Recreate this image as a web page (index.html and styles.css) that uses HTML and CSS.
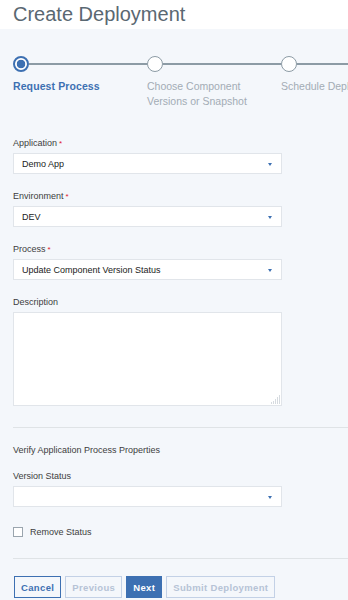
FILE: index.html
```html
<!DOCTYPE html>
<html>
<head>
  <title>Create Deployment</title>
  <link rel="stylesheet" href="styles.css">
</head>
<body>
  <div class="header">
    <h1 class="title">Create Deployment</h1>
  </div>
  <div class="panel">
    <div class="steps">
      <div class="step active">
        <div class="step-track"><span class="dot"></span><span class="line"></span></div>
        <div class="step-label">Request Process</div>
      </div>
      <div class="step">
        <div class="step-track"><span class="dot"></span><span class="line"></span></div>
        <div class="step-label">Choose Component Versions or Snapshot</div>
      </div>
      <div class="step">
        <div class="step-track"><span class="dot"></span><span class="line"></span></div>
        <div class="step-label">Schedule Deployment</div>
      </div>
    </div>

    <div class="form">
      <div class="field">
        <label class="label">Application<span class="req">*</span></label>
        <div class="select"><span>Demo App</span><span class="caret"></span></div>
      </div>
      <div class="field">
        <label class="label">Environment<span class="req">*</span></label>
        <div class="select"><span>DEV</span><span class="caret"></span></div>
      </div>
      <div class="field">
        <label class="label">Process<span class="req">*</span></label>
        <div class="select"><span>Update Component Version Status</span><span class="caret"></span></div>
      </div>
      <div class="field">
        <label class="label">Description</label>
        <div class="textarea-wrap">
          <textarea class="textarea"></textarea>
          <svg class="grip" width="9" height="9" viewBox="0 0 9 9">
            <rect x="0" y="7" width="1" height="2" fill="#d6dbe0"/>
            <rect x="2" y="6" width="1" height="3" fill="#d6dbe0"/>
            <rect x="4" y="4" width="1" height="5" fill="#d6dbe0"/>
            <rect x="6" y="2" width="1" height="7" fill="#d6dbe0"/>
            <rect x="8" y="0" width="1" height="9" fill="#d6dbe0"/>
          </svg>
        </div>
      </div>
    </div>

    <div class="rule"></div>

    <div class="form">
      <div class="section-title">Verify Application Process Properties</div>
      <div class="field">
        <label class="label">Version Status</label>
        <div class="select"><span></span><span class="caret"></span></div>
      </div>
      <label class="check"><span class="box"></span>Remove Status</label>
    </div>

    <div class="rule"></div>

    <div class="buttons">
      <button class="btn btn-secondary">Cancel</button>
      <button class="btn btn-disabled">Previous</button>
      <button class="btn btn-primary">Next</button>
      <button class="btn btn-disabled">Submit Deployment</button>
    </div>
  </div>
</body>
</html>
```

FILE: styles.css
```css
body, html {
  margin: 0;
  height: 100%;
}
body {
  font-family: "Liberation Sans", Arial, sans-serif;
  color: #3d3d3d;
  background: #fff;
  overflow: hidden;
  display: flex;
  flex-direction: column;
}
.header {
  height: 29px;
  padding-left: 13px;
  flex: none;
}
.title {
  margin: 0;
  font-size: 20px;
  font-weight: normal;
  line-height: 29px;
  color: #5a6872;
}
.panel {
  flex: 1;
  background: #f4f7fb;
  padding: 27px 0 0 13px;
}
.steps {
  display: flex;
  overflow: hidden;
}
.step {
  flex: 0 0 134px;
}
.step-track {
  display: flex;
  align-items: center;
  height: 16px;
}
.dot {
  box-sizing: border-box;
  width: 16px;
  height: 16px;
  border-radius: 50%;
  border: 1.5px solid #8c9ba5;
  background: #fff;
  flex: none;
}
.step.active .dot {
  border: 2px solid #3d70b2;
  background: radial-gradient(circle, #3d70b2 0, #3d70b2 4px, #fff 4.6px);
}
.line {
  flex: 1;
  height: 1.5px;
  background: #8c9ba5;
}
.step-label {
  margin-top: 7px;
  padding-right: 12px;
  font-size: 10.5px;
  line-height: 15px;
  color: #a3acb5;
}
.step:last-child .step-label {
  white-space: nowrap;
}
.step.active .step-label {
  color: #3d70b2;
  font-weight: bold;
  letter-spacing: 0.1px;
}
.form {
  width: 269px;
}
.steps + .form {
  margin-top: 28px;
}
.field {
  margin-bottom: 16px;
}
.label {
  display: block;
  font-size: 9px;
  line-height: 13px;
  margin-bottom: 3px;
  color: #3d3d3d;
}
.req {
  color: #e0182d;
  margin-left: 2px;
  font-size: 8px;
  vertical-align: top;
}
.select {
  box-sizing: border-box;
  height: 21px;
  background: #fff;
  border: 1px solid #e1e5ea;
  display: flex;
  align-items: center;
  justify-content: space-between;
  padding: 0 9px 0 8px;
  font-size: 9px;
  color: #222;
}
.caret {
  width: 0;
  height: 0;
  border-left: 2.5px solid transparent;
  border-right: 2.5px solid transparent;
  border-top: 3.5px solid #3d70b2;
  margin-top: 2px;
}
.textarea-wrap {
  position: relative;
  height: 94px;
}
.textarea {
  box-sizing: border-box;
  display: block;
  width: 100%;
  height: 94px;
  margin: 0;
  border: 1px solid #e1e5ea;
  background: #fff;
  resize: none;
  outline: none;
}
.grip {
  position: absolute;
  right: 2px;
  bottom: 2px;
}
.rule {
  height: 1px;
  background: #dfe3e6;
  margin: 21px 0 16px;
}
.section-title {
  font-size: 9px;
  line-height: 13px;
  margin-bottom: 13px;
}
.check {
  display: flex;
  align-items: center;
  font-size: 9px;
  height: 10px;
  margin-top: 20px;
  margin-bottom: 20px;
}
.box {
  box-sizing: border-box;
  width: 10px;
  height: 10px;
  border: 1px solid #9aa5ae;
  background: #fff;
  margin-right: 7px;
}
.buttons {
  display: flex;
  gap: 4px;
  padding-left: 1px;
  margin-top: 17px;
}
.rule + .buttons {
  margin-top: 17px;
}
.btn {
  box-sizing: border-box;
  height: 22px;
  padding: 0 6px;
  font-family: "Liberation Sans", Arial, sans-serif;
  font-size: 9.5px;
  font-weight: bold;
  letter-spacing: 0.35px;
  border: 1.5px solid #3d70b2;
  background: #f4f7fb;
  color: #3d70b2;
}
.btn-primary {
  background: #3d70b2;
  color: #fff;
}
.btn-disabled {
  border-color: #c3d1e6;
  color: #b6c3d6;
}
```
